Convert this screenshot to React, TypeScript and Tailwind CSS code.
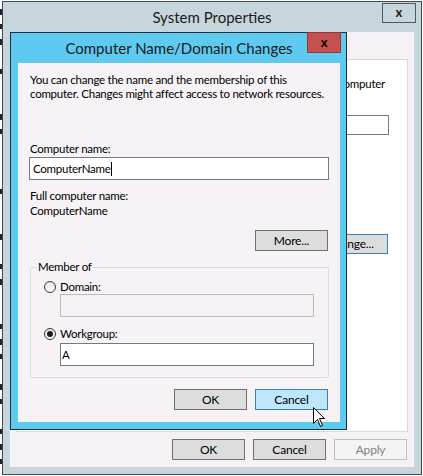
import React from "react";

type ButtonKind = "normal" | "hover" | "default" | "disabled";

const buttonKinds: Record<ButtonKind, string> = {
  normal: "border-[#707070] bg-[#dddddd] text-black",
  hover: "border-[#3c7fb1] bg-[#bee6fd] text-black",
  default: "border-[#3c7fb1] bg-[#dddddd] text-black",
  disabled: "border-[#bfbfbf] bg-[#f4f4f4] text-[#838383]",
};

const WinButton = ({
  label,
  kind = "normal",
  className = "",
}: {
  label: string;
  kind?: ButtonKind;
  className?: string;
}) => (
  <button
    type="button"
    className={`flex h-[21px] w-[73px] shrink-0 items-center justify-center border text-[12px] leading-none tracking-[-0.2px] ${buttonKinds[kind]} ${className}`}
  >
    {label}
  </button>
);

const Radio = ({ checked = false }: { checked?: boolean }) => (
  <span className="flex h-[12px] w-[12px] shrink-0 items-center justify-center rounded-full border border-[#3a3a3a] bg-gradient-to-b from-[#e6e6e6] to-white">
    {checked && <span className="h-[6px] w-[6px] rounded-full bg-[#1b1b1b]" />}
  </span>
);

const TextBox = ({
  value = "",
  caret = false,
  disabled = false,
  className = "",
}: {
  value?: string;
  caret?: boolean;
  disabled?: boolean;
  className?: string;
}) => (
  <div
    className={`flex h-[23px] items-center border pl-[2px] ${
      disabled ? "border-[#bcbcbc] bg-[#f5f1f5]" : "border-[#6f7a84] bg-white"
    } ${className}`}
  >
    <span>{value}</span>
    {caret && <span className="h-[14px] w-px bg-black" />}
  </div>
);

// ink specks from desktop labels showing at the left edge (px heights, 0 = gap)
const specks = [6, 5, 6, 0, 5, 0, 0, 6, 5, 0, 0, 0, 5, 0, 0, 6, 0, 5, 6, 0, 0, 5, 6, 5, 0, 6, 5, 0, 5, 6, 5];

const DesktopSpecks = () => (
  <div className="flex w-[2px] flex-col pt-[4px]">
    {specks.map((h, i) => (
      <div key={i} className="flex h-[15px] items-center justify-end">
        {h > 0 && <span className="w-[2px] bg-[#222]" style={{ height: h }} />}
      </div>
    ))}
  </div>
);

const Cursor = () => (
  <svg width="13" height="21" viewBox="0 0 13 21" className="absolute left-[313px] top-[407px]">
    <path
      d="M0.5 0.5 L0.5 16.5 L4.5 12.5 L7.5 19.5 L9.5 18.5 L6.5 11.5 L11.5 11.5 Z"
      fill="white"
      stroke="black"
      strokeWidth="1"
      strokeLinejoin="miter"
    />
  </svg>
);

export default function App() {
  return (
    <div className="relative h-[476px] w-[423px] overflow-hidden bg-white font-['Lato',sans-serif] text-[11.5px] tracking-[-0.25px] text-black">
      <DesktopSpecks />

      {/* System Properties window */}
      <div className="absolute left-[2px] top-[1px] flex h-[474px] w-[420px] flex-col border border-[#3f4b50] bg-[#c6d6dc] px-[7px] pb-[7px]">
        <div className="relative flex h-[30px] shrink-0 items-center justify-center text-[15px] tracking-normal text-[#1b1b1b]">
          System Properties
          <div className="absolute right-[-2px] top-[1px] flex h-[20px] w-[34px] items-center justify-center border border-[#4d5b61] text-[13px] font-bold">
            x
          </div>
        </div>
        <div className="flex flex-1 flex-col bg-[#f5f1f5] px-[6px] pb-[7px] pt-[27px]">
          <div className="flex h-[373px] flex-col items-end border border-[#d9d9d9] bg-white">
            <div className="mr-[22px] mt-[16px] leading-[15px]">
              Windows uses the following information to identify your computer
            </div>
            <div className="mr-[18px] mt-[24px] h-[20px] w-[260px] border border-[#7a7a7a] bg-white" />
            <WinButton label="Change..." kind="default" className="mr-[19px] mt-[99px] !h-[20px] w-[75px]" />
          </div>
          <div className="mt-[7px] flex justify-end gap-[8px] pr-[1px]">
            <WinButton label="OK" />
            <WinButton label="Cancel" />
            <WinButton label="Apply" kind="disabled" />
          </div>
        </div>
      </div>

      {/* Computer Name/Domain Changes dialog */}
      <div className="absolute left-[10px] top-[32px] flex h-[398px] w-[337px] flex-col border border-[#1d2f3a] bg-[#5ecaf0] pb-[7px] pl-[7px] pr-[6px]">
        <div className="flex h-[30px] shrink-0 items-center justify-center text-[15px] tracking-normal text-[#1b1b1b]">
          Computer Name/Domain Changes
        </div>
        <div className="absolute left-[296px] top-[-1px] flex h-[21px] w-[34px] items-center justify-center border border-[#8a3a3a] bg-[#c75050] text-[13px] font-bold">
          x
        </div>

        <div className="flex flex-1 flex-col bg-[#f6f2f6] px-[11px] pt-[10px]">
          <div className="flex flex-col pl-[1px]">
            <span className="h-[14px] leading-[14px]">You can change the name and the membership of this</span>
            <span className="h-[14px] leading-[14px]">computer. Changes might affect access to network resources.</span>
          </div>

          <div className="mt-[40px] pl-[1px] leading-[15px]">Computer name:</div>
          <TextBox value="ComputerName" caret className="mt-[1px] pl-[3px]" />

          <div className="mt-[8px] pl-[1px] leading-[15px]">Full computer name:</div>
          <div className="pl-[1px] leading-[15px]">ComputerName</div>

          <WinButton label="More..." className="mr-[1px] mt-[12px] self-end" />

          <div className="relative ml-[1px] mt-[16px] flex h-[111px] flex-col rounded-[2px] border border-[#d5dde3] pt-[11px]">
            <span className="absolute left-[6px] top-[-9px] bg-[#f6f2f6] px-[1px] leading-[15px]">Member of</span>
            <label className="ml-[13px] flex h-[15px] items-center gap-[4px]">
              <Radio />
              <span>Domain:</span>
            </label>
            <TextBox disabled className="ml-[29px] w-[254px]" />
            <label className="ml-[13px] mt-[9px] flex h-[15px] items-center gap-[4px]">
              <Radio checked />
              <span>Workgroup:</span>
            </label>
            <TextBox value="A" className="ml-[29px] mt-[2px] w-[254px] !pl-[1px]" />
          </div>

          <div className="mr-[1px] mt-[11px] flex justify-end gap-[8px]">
            <WinButton label="OK" />
            <WinButton label="Cancel" kind="hover" />
          </div>
        </div>
      </div>

      <Cursor />
    </div>
  );
}
